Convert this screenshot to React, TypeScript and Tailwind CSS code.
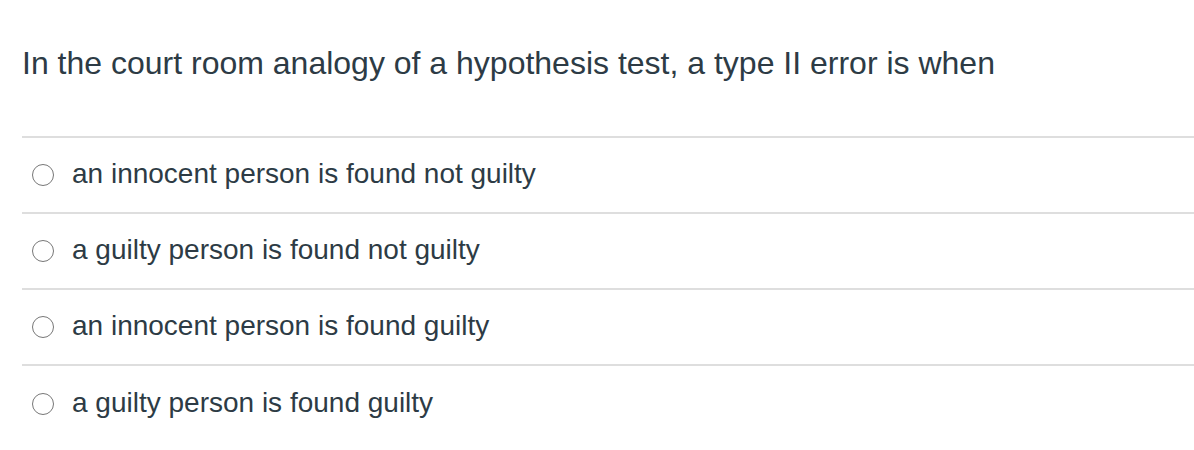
const options = [
  'an innocent person is found not guilty',
  'a guilty person is found not guilty',
  'an innocent person is found guilty',
  'a guilty person is found guilty',
];

export default function App() {
  return (
    <div className="min-h-[450px] bg-white text-[#2d3b45] font-['Liberation_Sans',Arial,sans-serif]">
      <div className="pl-[22px] pt-[44px]">
        <h1 className="text-[32px] leading-[38px]">
          In the court room analogy of a hypothesis test, a type II error is when
        </h1>
        <div className="mt-[54px] border-t-2 border-[#dedede]">
          {options.map((opt, i) => (
            <label
              key={i}
              className={`flex items-center h-[76px] pl-[10px] ${i < options.length - 1 ? 'border-b-2 border-[#dedede]' : ''}`}
            >
              <span className="w-[22px] h-[22px] rounded-full border-[1.5px] border-[#777] mr-[18px] shrink-0" />
              <span className="text-[28px] leading-[32px] pb-[2px]">{opt}</span>
            </label>
          ))}
        </div>
      </div>
    </div>
  );
}
